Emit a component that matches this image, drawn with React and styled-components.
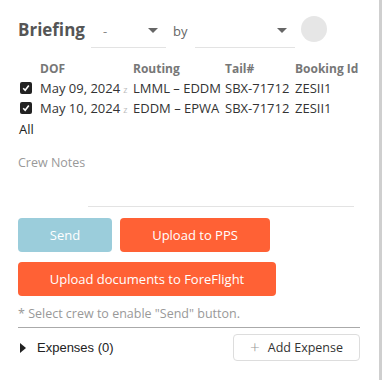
import React from "react";
import styled, { createGlobalStyle } from "styled-components";

const Global = createGlobalStyle`
  html, body { margin: 0; padding: 0; background: #fff; }
  body { font-family: "Open Sans", "Liberation Sans", sans-serif; color: #333; }
  * { box-sizing: border-box; }
`;

const Panel = styled.div`
  width: 382px;
  height: 380px;
  border-right: 3px solid #cfcfcf;
  padding: 14px 0 0 18px;
  overflow: hidden;
`;

const Header = styled.div`
  display: flex;
  align-items: center;
  height: 34px;
`;

const Title = styled.div`
  font-size: 17px;
  font-weight: 700;
  color: #555;
  width: 73px;
  margin-top: -4px;
`;

const Select = styled.div`
  width: ${(p) => p.$w}px;
  height: 34px;
  border-bottom: 1px solid #e3e3e3;
  display: flex;
  align-items: center;
  justify-content: space-between;
  padding: 0 8px 0 12px;
  font-size: 13px;
  color: #888;
`;

const Caret = styled.span`
  width: 0;
  height: 0;
  border-left: 5px solid transparent;
  border-right: 5px solid transparent;
  border-top: 5px solid #666;
`;

const By = styled.div`
  font-size: 13px;
  color: #666;
  width: 29px;
  padding-left: 7px;
`;

const Avatar = styled.div`
  width: 26px;
  height: 26px;
  border-radius: 50%;
  background: #e6e6e6;
  margin-left: 6px;
  margin-top: -4px;
`;

const Table = styled.div`
  margin-top: 10px;
  margin-left: 2px;
  display: grid;
  grid-template-columns: 20px 93px 92px 70px auto;
  grid-auto-rows: 20px;
  align-items: center;
  font-size: 13px;
  color: #333;
  white-space: nowrap;
`;

const Th = styled.div`
  font-size: 12px;
  font-weight: 700;
  color: #777;
`;

const Check = styled.span`
  width: 12px;
  height: 12px;
  border-radius: 2px;
  background: #222;
  display: flex;
  align-items: center;
  justify-content: center;
`;

const Z = styled.span`
  font-size: 9px;
  color: #bbb;
  margin-left: 3px;
`;

const All = styled.div`
  font-size: 13px;
  color: #222;
  margin-top: 2px;
  margin-left: 1px;
`;

const NotesLabel = styled.div`
  font-size: 12.5px;
  color: #999;
  margin-top: 16px;
`;

const NotesLine = styled.div`
  margin: 35px 0 0 70px;
  width: 266px;
  border-bottom: 1px solid #e3e3e3;
`;

const BtnRow = styled.div`
  display: flex;
  gap: 8px;
  margin-top: ${(p) => p.$mt}px;
`;

const Btn = styled.button`
  width: ${(p) => p.$w}px;
  height: 34px;
  border: none;
  border-radius: 4px;
  background: ${(p) => (p.$disabled ? "#9bcddb" : "#ff6135")};
  color: #fff;
  font-family: "Open Sans", sans-serif;
  font-size: 13px;
  padding: 0;
`;

const Note = styled.div`
  font-size: 12.5px;
  color: #999;
  margin-top: 9px;
`;

const Divider = styled.div`
  width: 342px;
  border-top: 1px solid #aaa;
  margin-top: 5px;
`;

const ExpRow = styled.div`
  display: flex;
  align-items: center;
  justify-content: space-between;
  width: 342px;
  margin-top: 6px;
`;

const ExpLabel = styled.div`
  display: flex;
  align-items: center;
  gap: 11px;
  padding-left: 2px;
  font-family: "Liberation Sans", Arial, sans-serif;
  font-size: 13px;
  color: #222;
`;

const Tri = styled.span`
  width: 0;
  height: 0;
  border-top: 5px solid transparent;
  border-bottom: 5px solid transparent;
  border-left: 6px solid #222;
`;

const AddBtn = styled.button`
  width: 127px;
  height: 27px;
  border: 1px solid #ddd;
  border-radius: 4px;
  background: #fff;
  display: flex;
  align-items: center;
  justify-content: center;
  gap: 8px;
  font-family: "Open Sans", sans-serif;
  font-size: 12.5px;
  color: #333;
  padding: 0;
`;

const Plus = styled.span`
  color: #999;
  font-size: 17px;
  font-weight: 300;
  line-height: 1;
  margin-top: -2px;
`;

const CheckIcon = () => (
  <Check>
    <svg width="8" height="8" viewBox="0 0 8 8">
      <path d="M1.2 4.2 L3.2 6.2 L6.8 1.6" stroke="#fff" strokeWidth="1.6" fill="none" />
    </svg>
  </Check>
);

const rows = [
  { date: "May 09, 2024", route: "LMML – EDDM", tail: "SBX-71712", id: "ZESII1" },
  { date: "May 10, 2024", route: "EDDM – EPWA", tail: "SBX-71712", id: "ZESII1" },
];

export default function App() {
  return (
    <>
      <Global />
      <Panel>
        <Header>
          <Title>Briefing</Title>
          <Select $w={75}>
            <span>-</span>
            <Caret />
          </Select>
          <By>by</By>
          <Select $w={100}>
            <span />
            <Caret />
          </Select>
          <Avatar />
        </Header>
        <Table>
          <span />
          <Th>DOF</Th>
          <Th>Routing</Th>
          <Th>Tail#</Th>
          <Th>Booking Id</Th>
          {rows.map((r) => (
            <React.Fragment key={r.date}>
              <CheckIcon />
              <div>
                {r.date}
                <Z>z</Z>
              </div>
              <div>{r.route}</div>
              <div>{r.tail}</div>
              <div>{r.id}</div>
            </React.Fragment>
          ))}
        </Table>
        <All>All</All>
        <NotesLabel>Crew Notes</NotesLabel>
        <NotesLine />
        <BtnRow $mt={11}>
          <Btn $w={94} $disabled>Send</Btn>
          <Btn $w={150}>Upload to PPS</Btn>
        </BtnRow>
        <BtnRow $mt={10}>
          <Btn $w={258}>Upload documents to ForeFlight</Btn>
        </BtnRow>
        <Note>* Select crew to enable "Send" button.</Note>
        <Divider />
        <ExpRow>
          <ExpLabel>
            <Tri />
            Expenses (0)
          </ExpLabel>
          <AddBtn>
            <Plus>+</Plus>
            Add Expense
          </AddBtn>
        </ExpRow>
      </Panel>
    </>
  );
}
